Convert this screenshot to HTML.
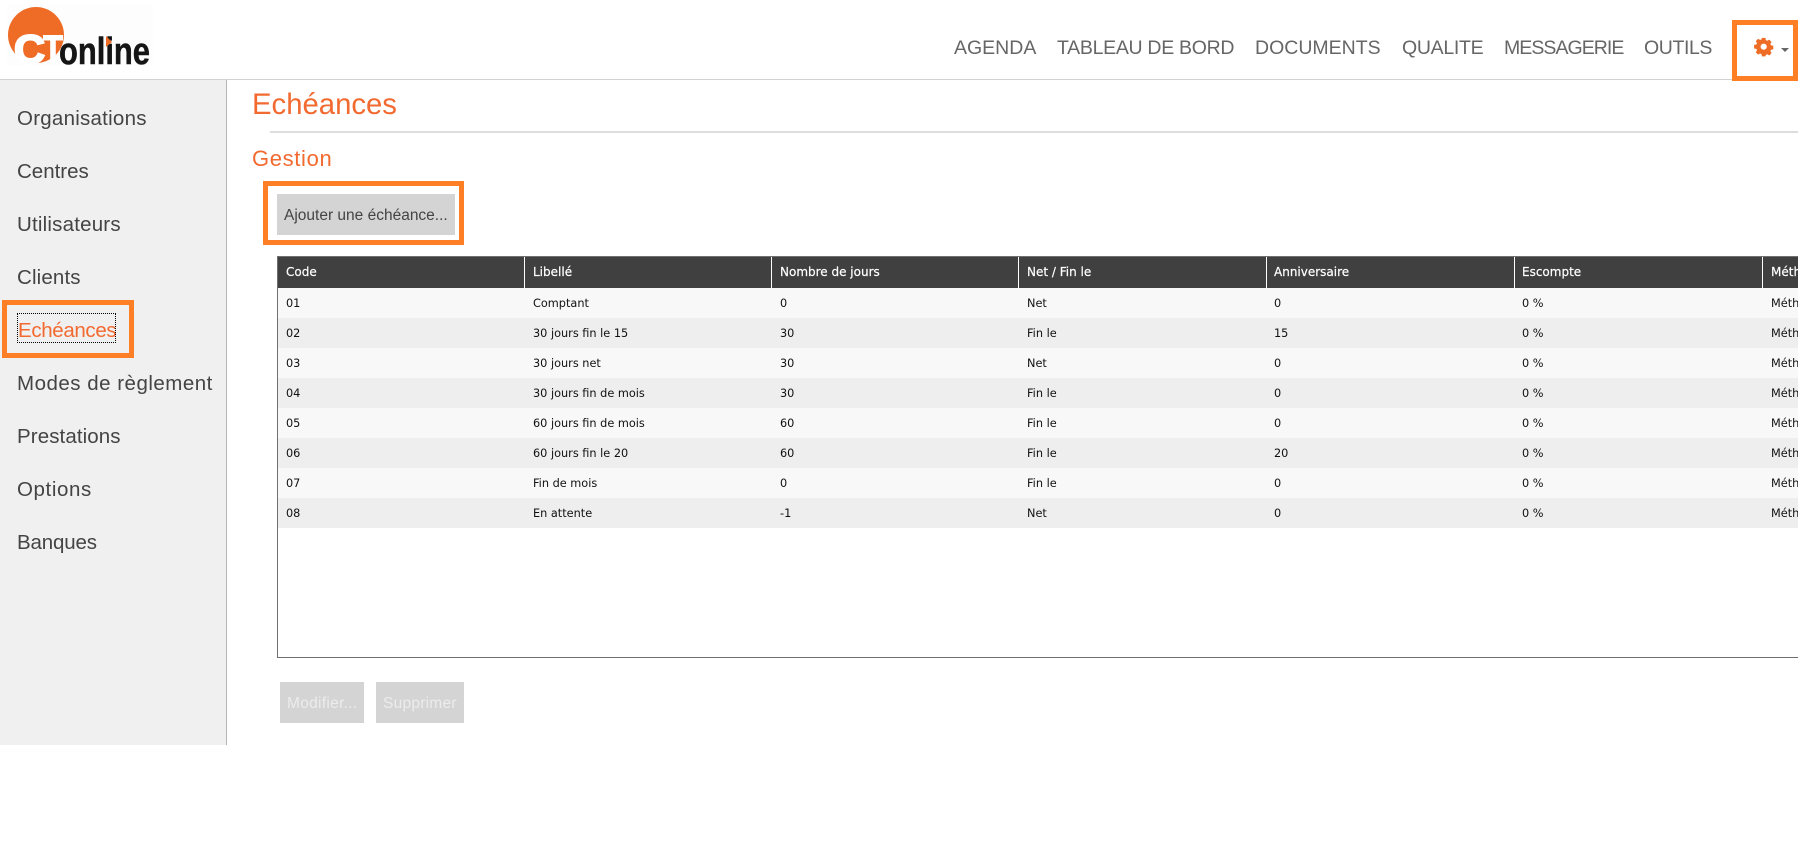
<!DOCTYPE html>
<html lang="fr"><head><meta charset="utf-8"><title>Echéances</title>
<style>
html,body{margin:0;padding:0;background:#fff;width:1798px;height:860px;overflow:hidden}
body{position:relative;font-family:"Liberation Sans",sans-serif}
.a{position:absolute;white-space:nowrap}
.nav{top:36px;font-size:19.5px;line-height:24px;color:#666}
.side{left:17px;font-size:20.5px;line-height:27px;color:#444}
.box{position:absolute;border:5px solid #ff7f27;box-sizing:border-box}
.btn{position:absolute;background:#d4d4d4;height:41px;line-height:44px;font-size:15.5px;white-space:nowrap}
.tb{position:absolute;left:277px;top:256px;width:1540px;height:402px;border:1px solid #707070;border-right:0;box-sizing:border-box;overflow:hidden;font-family:"DejaVu Sans",sans-serif;font-size:11.3px;color:#111}
.h{position:absolute;left:0;top:0;width:100%;height:31px;background:#404040}
.s{position:absolute;top:0;width:1px;height:31px;background:#fff}
.hc{position:absolute;top:0;line-height:31px;color:#fff;font-size:12px;white-space:nowrap;-webkit-text-stroke:.2px #fff}
.r{position:absolute;left:0;width:100%;height:30px}
.r span{position:absolute;top:0;line-height:31px;white-space:nowrap}
.c1{left:8px}.c2{left:255px}.c3{left:502px}.c4{left:749px}.c5{left:996px}.c6{left:1244px}.c7{left:1493px}
.o{background:#f8f8f8}.e{background:#eeeeee}
</style></head><body>

<svg class="a" style="left:0;top:0" width="160" height="72" viewBox="0 0 160 72">
<rect x="7" y="4" width="146" height="61" fill="#fdfdfd"/>
<circle cx="36" cy="35" r="28" fill="#ee6c26"/>
<text x="14" y="63" font-family="Liberation Sans" font-weight="700" font-size="40" fill="#fff" textLength="31" lengthAdjust="spacingAndGlyphs" stroke="#fff" stroke-width="2">C</text>
<text x="43" y="63" font-family="Liberation Sans" font-weight="700" font-size="40" fill="#fff" textLength="20" lengthAdjust="spacingAndGlyphs" stroke="#fff" stroke-width="1">T</text>
<text x="59" y="64" font-family="Liberation Sans" font-weight="700" font-size="38" fill="#151515" stroke="#151515" stroke-width=".5" textLength="91" lengthAdjust="spacingAndGlyphs">online</text>
<polygon points="106,36 112,42 106,47" fill="#ee6c26"/>
</svg>

<div class="a" style="left:0;top:79px;width:1798px;height:1px;background:#d2d2d2"></div>

<div class="a nav" style="left:954px">AGENDA</div>
<div class="a nav" style="left:1057px;letter-spacing:-.3px">TABLEAU DE BORD</div>
<div class="a nav" style="left:1255px">DOCUMENTS</div>
<div class="a nav" style="left:1402px;letter-spacing:-.3px">QUALITE</div>
<div class="a nav" style="left:1504px;letter-spacing:-.95px">MESSAGERIE</div>
<div class="a nav" style="left:1644px;letter-spacing:-.4px">OUTILS</div>

<svg class="a" style="left:1753px;top:36px" width="22" height="22" viewBox="0 0 22 22">
<path fill="#ee6c26" fill-rule="evenodd" d="M9 1h4l.5 2.6 1.6.7L17.3 3l2.7 2.7-1.4 2.2.7 1.6 2.6.5v4l-2.6.5-.7 1.6 1.4 2.2-2.7 2.7-2.2-1.4-1.6.7L13 22H9l-.5-2.6-1.6-.7L4.700 20 2 17.300l1.400-2.200-.7-1.600L.1 13V9l2.600-.5.7-1.600L2 4.700 4.700 2l2.200 1.400 1.600-.7zM11 7.500a3.500 3.500 0 1 0 0 7 3.500 3.500 0 0 0 0-7z" transform="translate(1 1) scale(.88)"/>
</svg>
<div class="a" style="left:1781px;top:48px;width:0;height:0;border-left:4px solid transparent;border-right:4px solid transparent;border-top:4px solid #666"></div>
<div class="box" style="left:1732px;top:20px;width:66px;height:61px"></div>

<div class="a" style="left:0;top:80px;width:226px;height:665px;background:#f0f0f0"></div>
<div class="a" style="left:226px;top:80px;width:1px;height:665px;background:#b4b4b4"></div>

<div class="a side" style="top:105px;letter-spacing:.25px">Organisations</div>
<div class="a side" style="top:158px">Centres</div>
<div class="a side" style="top:211px;letter-spacing:.2px">Utilisateurs</div>
<div class="a side" style="top:264px;letter-spacing:.15px">Clients</div>
<div class="a side" style="top:317px;left:18px;color:#f26a30;letter-spacing:-.35px">Echéances</div>
<div class="a" style="left:17px;top:313px;width:97px;height:28px;border:1px dotted #000"></div>
<div class="a side" style="top:370px;letter-spacing:.5px">Modes de règlement</div>
<div class="a side" style="top:423px;letter-spacing:.1px">Prestations</div>
<div class="a side" style="top:476px;letter-spacing:.6px">Options</div>
<div class="a side" style="top:529px;letter-spacing:-.15px">Banques</div>
<div class="box" style="left:2px;top:300px;width:132px;height:58px"></div>

<div class="a" style="left:252px;top:86px;font-size:29.300px;line-height:38px;color:#f26a30">Echéances</div>
<div class="a" style="left:270px;top:131px;width:1528px;height:2px;background:#ddd"></div>
<div class="a" style="left:252px;top:145px;font-size:22px;line-height:28px;color:#f26a30;letter-spacing:.65px">Gestion</div>

<div class="btn" style="left:277px;top:194px;width:178px;color:#444"><span style="position:absolute;left:7px">Ajouter une échéance...</span></div>
<div class="box" style="left:263px;top:181px;width:201px;height:64px"></div>

<div class="tb">
<div class="h"></div>
<div class="s" style="left:246px"></div><div class="s" style="left:493px"></div><div class="s" style="left:740px"></div><div class="s" style="left:988px"></div><div class="s" style="left:1236px"></div><div class="s" style="left:1484px"></div>
<div class="hc c1">Code</div><div class="hc c2">Libellé</div><div class="hc c3">Nombre de jours</div><div class="hc c4">Net / Fin le</div><div class="hc c5">Anniversaire</div><div class="hc c6">Escompte</div><div class="hc c7">Méthode</div>
<div class="r o" style="top:31px"><span class="c1">01</span><span class="c2">Comptant</span><span class="c3">0</span><span class="c4">Net</span><span class="c5">0</span><span class="c6">0 %</span><span class="c7">Méthode</span></div>
<div class="r e" style="top:61px"><span class="c1">02</span><span class="c2">30 jours fin le 15</span><span class="c3">30</span><span class="c4">Fin le</span><span class="c5">15</span><span class="c6">0 %</span><span class="c7">Méthode</span></div>
<div class="r o" style="top:91px"><span class="c1">03</span><span class="c2">30 jours net</span><span class="c3">30</span><span class="c4">Net</span><span class="c5">0</span><span class="c6">0 %</span><span class="c7">Méthode</span></div>
<div class="r e" style="top:121px"><span class="c1">04</span><span class="c2">30 jours fin de mois</span><span class="c3">30</span><span class="c4">Fin le</span><span class="c5">0</span><span class="c6">0 %</span><span class="c7">Méthode</span></div>
<div class="r o" style="top:151px"><span class="c1">05</span><span class="c2">60 jours fin de mois</span><span class="c3">60</span><span class="c4">Fin le</span><span class="c5">0</span><span class="c6">0 %</span><span class="c7">Méthode</span></div>
<div class="r e" style="top:181px"><span class="c1">06</span><span class="c2">60 jours fin le 20</span><span class="c3">60</span><span class="c4">Fin le</span><span class="c5">20</span><span class="c6">0 %</span><span class="c7">Méthode</span></div>
<div class="r o" style="top:211px"><span class="c1">07</span><span class="c2">Fin de mois</span><span class="c3">0</span><span class="c4">Fin le</span><span class="c5">0</span><span class="c6">0 %</span><span class="c7">Méthode</span></div>
<div class="r e" style="top:241px"><span class="c1">08</span><span class="c2">En attente</span><span class="c3">-1</span><span class="c4">Net</span><span class="c5">0</span><span class="c6">0 %</span><span class="c7">Méthode</span></div>
</div>

<div class="btn" style="left:280px;top:682px;width:84px;color:#ececec"><span style="position:absolute;left:7px;letter-spacing:.3px">Modifier...</span></div>
<div class="btn" style="left:376px;top:682px;width:88px;color:#ececec"><span style="position:absolute;left:7px;letter-spacing:.25px">Supprimer</span></div>

</body></html>
